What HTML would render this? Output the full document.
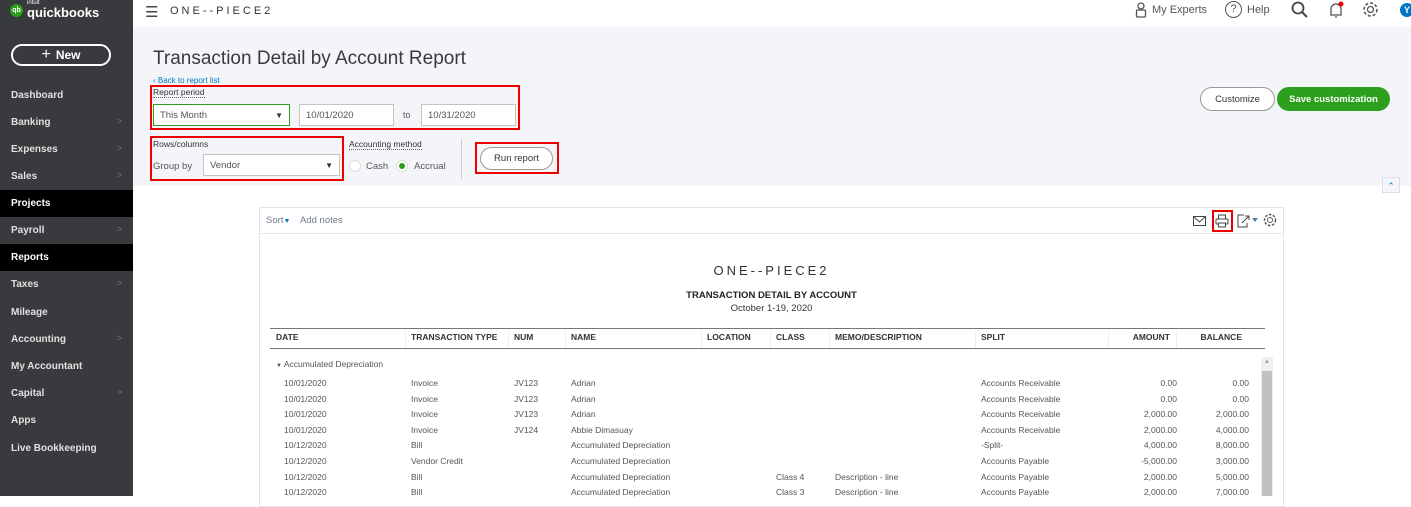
<!DOCTYPE html>
<html><head><meta charset="utf-8"><style>
*{box-sizing:border-box;margin:0;padding:0}
body{width:1411px;height:496px;overflow:hidden;position:relative;font-family:"Liberation Sans",sans-serif;background:#fff;color:#393a3d}
.a{position:absolute;white-space:nowrap}
#sb{left:0;top:0;width:133px;height:496px;background:#393a3d}
.nav{position:absolute;left:0;width:133px;height:27px;color:#e0e0e0;font-size:10px;font-weight:bold;padding:8px 0 0 11px}
.nav.on{background:#000;color:#fff}
.nav .c{position:absolute;right:11px;top:7px;color:#777;font-weight:normal;font-size:9px}
.box{position:absolute;background:#fff;border:1px solid #c4c4c4;font-size:9.5px;color:#555;padding:0 6px;display:flex;align-items:center}
.btn{position:absolute;display:flex;align-items:center;justify-content:center;font-size:9.5px;border-radius:12px}
.red{position:absolute;border:2px solid #e00}
.th{position:absolute;top:332px;font-size:8.5px;font-weight:bold;color:#333}
.td{position:absolute;font-size:8.5px;color:#555}
</style></head><body>
<div class="a" style="left:0;top:0;width:1411px;height:27px;background:#fff"></div>
<div class="a" style="left:133px;top:27px;width:1278px;height:159px;background:#f4f5f8"></div>
<div class="a" id="sb"></div>
<div class="a" style="left:10px;top:4px;width:13px;height:13px;border-radius:50%;background:#2ca01c;color:#fff;font-size:7px;font-weight:bold;text-align:center;line-height:13px">qb</div>
<div class="a" style="left:27px;top:0px;color:#fff;font-size:6px">intuit</div>
<div class="a" style="left:27px;top:5px;color:#fff;font-size:13px;font-weight:bold">quickbooks</div>
<div class="btn" style="left:11px;top:44px;width:100px;height:22px;border:2px solid #fff;color:#fff;font-size:12px;font-weight:bold"><span style="font-size:16px;font-weight:normal;margin-right:5px">+</span>New</div>
<div class="nav" style="top:82px">Dashboard</div>
<div class="nav" style="top:109px">Banking<span class="c">&gt;</span></div>
<div class="nav" style="top:136px">Expenses<span class="c">&gt;</span></div>
<div class="nav" style="top:163px">Sales<span class="c">&gt;</span></div>
<div class="nav on" style="top:190px">Projects</div>
<div class="nav" style="top:217px">Payroll<span class="c">&gt;</span></div>
<div class="nav on" style="top:244px">Reports</div>
<div class="nav" style="top:271px">Taxes<span class="c">&gt;</span></div>
<div class="nav" style="top:299px">Mileage</div>
<div class="nav" style="top:326px">Accounting<span class="c">&gt;</span></div>
<div class="nav" style="top:353px">My Accountant</div>
<div class="nav" style="top:380px">Capital<span class="c">&gt;</span></div>
<div class="nav" style="top:407px">Apps</div>
<div class="nav" style="top:435px">Live Bookkeeping</div>

<div class="a" style="left:145px;top:3px;font-size:15px;color:#444">&#9776;</div>
<div class="a" style="left:170px;top:5px;font-size:11px;letter-spacing:3px;color:#333">ONE--PIECE2</div>
<svg class="a" style="left:1135px;top:2px" width="12" height="16"><circle cx="6" cy="4" r="3" fill="none" stroke="#555" stroke-width="1.3"/><rect x="1.5" y="8" width="9" height="7" rx="1" fill="none" stroke="#555" stroke-width="1.3"/></svg>
<div class="a" style="left:1152px;top:4px;font-size:11px;color:#555">My Experts</div>
<div class="a" style="left:1225px;top:1px;width:17px;height:17px;border:1.5px solid #555;border-radius:50%;font-size:11px;text-align:center;line-height:14px;color:#555">?</div>
<div class="a" style="left:1247px;top:4px;font-size:11px;color:#555">Help</div>
<svg class="a" style="left:1291px;top:1px" width="18" height="18"><circle cx="7" cy="7" r="5.5" fill="none" stroke="#444" stroke-width="1.8"/><path d="M11 11L16 16" stroke="#444" stroke-width="2"/></svg>
<svg class="a" style="left:1327px;top:1px" width="18" height="18"><path d="M4 14V8a5 5 0 0 1 10 0v6H3M8 16h2" fill="none" stroke="#555" stroke-width="1.3"/><circle cx="14" cy="3" r="2.5" fill="#e00"/></svg>
<svg class="a" style="left:1362px;top:1px" width="17" height="17"><circle cx="8.5" cy="8.5" r="3" fill="none" stroke="#555" stroke-width="1.3"/><circle cx="8.5" cy="8.5" r="6.5" fill="none" stroke="#555" stroke-width="1.6" stroke-dasharray="3 2"/></svg>
<div class="a" style="left:1400px;top:3px;width:14px;height:14px;border-radius:50%;background:#0077c5;color:#fff;font-size:9px;font-weight:bold;padding-left:4px;line-height:14px">Y</div>

<div class="a" style="left:153px;top:48px;font-size:19px;color:#393a3d">Transaction Detail by Account Report</div>
<div class="a" style="left:153px;top:76px;font-size:8px;color:#0077c5">&#8249; Back to report list</div>
<div class="a" style="left:153px;top:87px;font-size:8.5px;color:#333;border-bottom:1px dotted #666">Report period</div>
<div class="box" style="left:153px;top:104px;width:137px;height:22px;border-color:#2ca01c">This Month<span style="margin-left:auto;font-size:8px;color:#333">&#9660;</span></div>
<div class="box" style="left:299px;top:104px;width:95px;height:22px">10/01/2020</div>
<div class="a" style="left:403px;top:110px;font-size:9px;color:#555">to</div>
<div class="box" style="left:421px;top:104px;width:95px;height:22px">10/31/2020</div>
<div class="red" style="left:150px;top:85px;width:370px;height:45px"></div>
<div class="a" style="left:153px;top:139px;font-size:8.5px;color:#333">Rows/columns</div>
<div class="a" style="left:153px;top:161px;font-size:9.5px;color:#555">Group by</div>
<div class="box" style="left:203px;top:154px;width:137px;height:22px">Vendor<span style="margin-left:auto;font-size:8px;color:#333">&#9660;</span></div>
<div class="red" style="left:150px;top:136px;width:194px;height:45px"></div>
<div class="a" style="left:349px;top:139px;font-size:8.5px;color:#333;border-bottom:1px dotted #666">Accounting method</div>
<div class="a" style="left:349px;top:160px;width:12px;height:12px;border-radius:50%;background:#fff;border:1px solid #ddd"></div>
<div class="a" style="left:366px;top:161px;font-size:9.5px;color:#555">Cash</div>
<div class="a" style="left:396px;top:160px;width:12px;height:12px;border-radius:50%;background:#fff;border:1px solid #ddd"></div>
<div class="a" style="left:399px;top:163px;width:6px;height:6px;border-radius:50%;background:#2ca01c"></div>
<div class="a" style="left:414px;top:161px;font-size:9.5px;color:#555">Accrual</div>
<div class="a" style="left:461px;top:139px;width:1px;height:40px;background:#ccc"></div>
<div class="btn" style="left:480px;top:147px;width:73px;height:23px;border:1.5px solid #999;background:#fff;color:#333">Run report</div>
<div class="red" style="left:475px;top:142px;width:84px;height:32px"></div>
<div class="btn" style="left:1200px;top:87px;width:75px;height:24px;border:1.5px solid #999;background:#fff;color:#333">Customize</div>
<div class="btn" style="left:1277px;top:87px;width:113px;height:24px;background:#2ca01c;font-weight:bold;color:#fff">Save customization</div>
<div class="a" style="left:1382px;top:177px;width:18px;height:16px;border:1px solid #dde;background:#f4f5f8;font-size:9px;color:#0077c5;text-align:center;line-height:16px">&#8963;</div>

<div class="a" style="left:259px;top:207px;width:1025px;height:300px;border:1px solid #e3e5ea"></div>
<div class="a" style="left:259px;top:233px;width:1025px;height:1px;background:#e3e5ea"></div>
<div class="a" style="left:266px;top:215px;font-size:9.5px;color:#6b7b8c">Sort<span style="font-size:7px;color:#0077c5">&#9660;</span></div>
<div class="a" style="left:300px;top:215px;font-size:9.5px;color:#6b7b8c">Add notes</div>
<svg class="a" style="left:1193px;top:216px" width="13" height="10"><rect x="0.5" y="0.5" width="12" height="9" fill="none" stroke="#444"/><path d="M0.5 0.5L6.5 6L12.5 0.5" fill="none" stroke="#444"/></svg>
<svg class="a" style="left:1215px;top:214px" width="14" height="14"><rect x="3.5" y="1" width="7" height="4" fill="none" stroke="#444"/><rect x="1" y="5" width="12" height="5" rx="1" fill="none" stroke="#444"/><rect x="3.5" y="9" width="7" height="4" fill="#fff" stroke="#444"/></svg>
<div class="red" style="left:1212px;top:210px;width:21px;height:22px"></div>
<svg class="a" style="left:1237px;top:214px" width="22" height="14"><path d="M7 1H1v12h9V9M5 9l7-7M8 2h4v4" fill="none" stroke="#444"/><path d="M15 4h6l-3 4z" fill="#4a7fb5"/></svg>
<svg class="a" style="left:1263px;top:213px" width="14" height="14"><circle cx="7" cy="7" r="2.5" fill="none" stroke="#555"/><circle cx="7" cy="7" r="5.5" fill="none" stroke="#555" stroke-width="1.5" stroke-dasharray="2.5 1.6"/></svg>

<div class="a" style="left:259px;top:263px;width:1025px;text-align:center;font-size:13px;letter-spacing:3px;color:#333">ONE--PIECE2</div>
<div class="a" style="left:259px;top:290px;width:1025px;text-align:center;font-size:9.5px;font-weight:bold;color:#222">TRANSACTION DETAIL BY ACCOUNT</div>
<div class="a" style="left:259px;top:303px;width:1025px;text-align:center;font-size:9.5px;color:#333">October 1-19, 2020</div>
<div class="a" style="left:270px;top:328px;width:995px;height:1px;background:#777"></div>
<div class="a" style="left:270px;top:348px;width:995px;height:1px;background:#777"></div>
<div class="th" style="left:276px">DATE</div>
<div class="th" style="left:411px">TRANSACTION TYPE</div>
<div class="th" style="left:514px">NUM</div>
<div class="th" style="left:571px">NAME</div>
<div class="th" style="left:707px">LOCATION</div>
<div class="th" style="left:776px">CLASS</div>
<div class="th" style="left:835px">MEMO/DESCRIPTION</div>
<div class="th" style="left:981px">SPLIT</div>
<div class="th" style="left:1110px;width:60px;text-align:right">AMOUNT</div>
<div class="th" style="left:1182px;width:60px;text-align:right">BALANCE</div>
<div class="a" style="left:405px;top:330px;width:1px;height:18px;background:#eee"></div>
<div class="a" style="left:508px;top:330px;width:1px;height:18px;background:#eee"></div>
<div class="a" style="left:565px;top:330px;width:1px;height:18px;background:#eee"></div>
<div class="a" style="left:701px;top:330px;width:1px;height:18px;background:#eee"></div>
<div class="a" style="left:770px;top:330px;width:1px;height:18px;background:#eee"></div>
<div class="a" style="left:829px;top:330px;width:1px;height:18px;background:#eee"></div>
<div class="a" style="left:975px;top:330px;width:1px;height:18px;background:#eee"></div>
<div class="a" style="left:1108px;top:330px;width:1px;height:18px;background:#eee"></div>
<div class="a" style="left:1176px;top:330px;width:1px;height:18px;background:#eee"></div>
<div class="a" style="left:1261px;top:357px;width:12px;height:139px;background:#f1f1f1"></div>
<div class="a" style="left:1262px;top:371px;width:10px;height:125px;background:#c1c1c1"></div>
<div class="a" style="left:1264px;top:359px;font-size:6px;color:#999">&#9650;</div>
<div class="td" style="left:276px;top:359px"><span style="font-size:6px">&#9660;</span> Accumulated Depreciation</div>

<div class="td" style="left:284px;top:378px">10/01/2020</div><div class="td" style="left:411px;top:378px">Invoice</div><div class="td" style="left:514px;top:378px">JV123</div><div class="td" style="left:571px;top:378px">Adrian</div><div class="td" style="left:981px;top:378px">Accounts Receivable</div><div class="td" style="left:1110px;top:378px;width:67px;text-align:right">0.00</div><div class="td" style="left:1180px;top:378px;width:69px;text-align:right">0.00</div>
<div class="td" style="left:284px;top:394px">10/01/2020</div><div class="td" style="left:411px;top:394px">Invoice</div><div class="td" style="left:514px;top:394px">JV123</div><div class="td" style="left:571px;top:394px">Adrian</div><div class="td" style="left:981px;top:394px">Accounts Receivable</div><div class="td" style="left:1110px;top:394px;width:67px;text-align:right">0.00</div><div class="td" style="left:1180px;top:394px;width:69px;text-align:right">0.00</div>
<div class="td" style="left:284px;top:409px">10/01/2020</div><div class="td" style="left:411px;top:409px">Invoice</div><div class="td" style="left:514px;top:409px">JV123</div><div class="td" style="left:571px;top:409px">Adrian</div><div class="td" style="left:981px;top:409px">Accounts Receivable</div><div class="td" style="left:1110px;top:409px;width:67px;text-align:right">2,000.00</div><div class="td" style="left:1180px;top:409px;width:69px;text-align:right">2,000.00</div>
<div class="td" style="left:284px;top:425px">10/01/2020</div><div class="td" style="left:411px;top:425px">Invoice</div><div class="td" style="left:514px;top:425px">JV124</div><div class="td" style="left:571px;top:425px">Abbie Dimasuay</div><div class="td" style="left:981px;top:425px">Accounts Receivable</div><div class="td" style="left:1110px;top:425px;width:67px;text-align:right">2,000.00</div><div class="td" style="left:1180px;top:425px;width:69px;text-align:right">4,000.00</div>
<div class="td" style="left:284px;top:440px">10/12/2020</div><div class="td" style="left:411px;top:440px">Bill</div><div class="td" style="left:571px;top:440px">Accumulated Depreciation</div><div class="td" style="left:981px;top:440px">-Split-</div><div class="td" style="left:1110px;top:440px;width:67px;text-align:right">4,000.00</div><div class="td" style="left:1180px;top:440px;width:69px;text-align:right">8,000.00</div>
<div class="td" style="left:284px;top:456px">10/12/2020</div><div class="td" style="left:411px;top:456px">Vendor Credit</div><div class="td" style="left:571px;top:456px">Accumulated Depreciation</div><div class="td" style="left:981px;top:456px">Accounts Payable</div><div class="td" style="left:1110px;top:456px;width:67px;text-align:right">-5,000.00</div><div class="td" style="left:1180px;top:456px;width:69px;text-align:right">3,000.00</div>
<div class="td" style="left:284px;top:472px">10/12/2020</div><div class="td" style="left:411px;top:472px">Bill</div><div class="td" style="left:571px;top:472px">Accumulated Depreciation</div><div class="td" style="left:776px;top:472px">Class 4</div><div class="td" style="left:835px;top:472px">Description - line</div><div class="td" style="left:981px;top:472px">Accounts Payable</div><div class="td" style="left:1110px;top:472px;width:67px;text-align:right">2,000.00</div><div class="td" style="left:1180px;top:472px;width:69px;text-align:right">5,000.00</div>
<div class="td" style="left:284px;top:487px">10/12/2020</div><div class="td" style="left:411px;top:487px">Bill</div><div class="td" style="left:571px;top:487px">Accumulated Depreciation</div><div class="td" style="left:776px;top:487px">Class 3</div><div class="td" style="left:835px;top:487px">Description - line</div><div class="td" style="left:981px;top:487px">Accounts Payable</div><div class="td" style="left:1110px;top:487px;width:67px;text-align:right">2,000.00</div><div class="td" style="left:1180px;top:487px;width:69px;text-align:right">7,000.00</div>
</body></html>
